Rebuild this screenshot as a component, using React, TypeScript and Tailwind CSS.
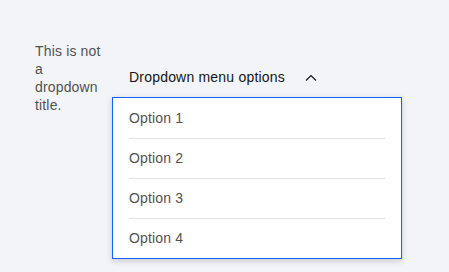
import React from "react";

export default function App() {
  const options = ["Option 1", "Option 2", "Option 3", "Option 4"];
  return (
    <div
      className="w-[449px] h-[272px] bg-[#f2f4f8] flex items-start pl-[35px] pt-[42px]"
      style={{ fontFamily: '"Liberation Sans", Arial, sans-serif' }}
    >
      <div className="w-[66px] text-[14px] leading-[18px] tracking-[0.16px] text-[#525252]">
        This is not a dropdown title.
      </div>
      <div className="ml-[11px] mt-[15px] flex flex-col w-[290px]">
        <div className="h-[40px] flex items-center pl-[17px] text-[14px] tracking-[0.2px] text-[#161616]">
          <span>Dropdown menu options</span>
          <svg className="ml-[20px] mt-[1px]" width="12" height="8" viewBox="0 0 12 8" fill="none">
            <path d="M1 6.5 L6 1.5 L11 6.5" stroke="#161616" strokeWidth="1.2" />
          </svg>
        </div>
        <div className="border border-[#0f62fe] bg-white shadow-[0_2px_6px_rgba(0,0,0,0.18)]">
          {options.map((o, i) => (
            <div key={o} className="h-[40px] px-[16px]">
              <div
                className={
                  "h-full flex items-center text-[14px] tracking-[0.16px] text-[#525252] " +
                  (i > 0 ? "border-t border-[#e0e0e0]" : "")
                }
              >
                {o}
              </div>
            </div>
          ))}
        </div>
      </div>
    </div>
  );
}
